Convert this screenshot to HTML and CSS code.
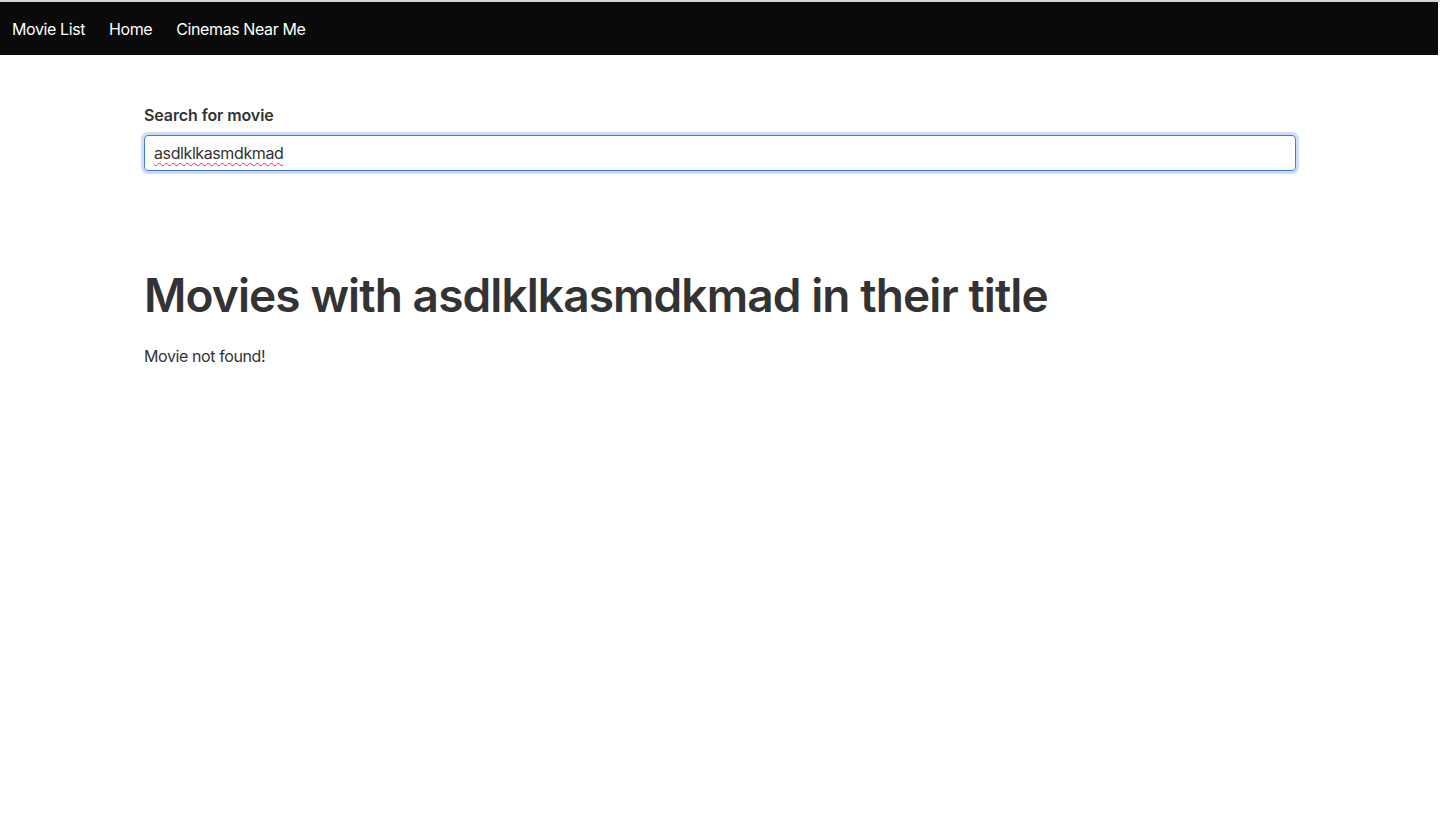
FILE: index.html
```html
<!DOCTYPE html>
<html lang="en">
<head>
<meta charset="utf-8">
<title>Movie List</title>
<link rel="stylesheet" href="styles.css">
</head>
<body>
<div class="topline"></div>
<nav class="navbar">
  <a class="nav-brand" href="#">Movie List</a>
  <a class="nav-link" href="#">Home</a>
  <a class="nav-link" href="#">Cinemas Near Me</a>
</nav>
<main class="container">
  <form class="search">
    <label class="label" for="q">Search for movie</label>
    <div class="input"><span class="typed">asdlklkasmdkmad</span></div>
  </form>
  <h1 class="title">Movies with asdlklkasmdkmad in their title</h1>
  <p class="empty">Movie not found!</p>
</main>
</body>
</html>
```
FILE: styles.css
```css
* { box-sizing: border-box; }
html, body { margin: 0; padding: 0; background: #fff; }
body {
  font-family: Inter, "Noto Sans", "Liberation Sans", sans-serif;
  color: #333;
  font-size: 16px;
  line-height: 1.5;
  letter-spacing: -0.4px;
}
.topline { height: 2px; background: #d4d4d4; }
.navbar {
  height: 53px;
  background: #0a0a0a;
  display: flex;
  align-items: center;
  gap: 24px;
  padding: 0 12px;
  margin-right: 2px;
}
.nav-brand, .nav-link {
  color: #fff;
  text-decoration: none;
  font-size: 16px;
}
.container {
  width: 1152px;
  margin: 0 auto;
  padding-top: 48px;
}
.search { display: flex; flex-direction: column; gap: 8px; }
.label { font-weight: 600; font-size: 16px; line-height: 24px; letter-spacing: -0.1px; }
.input {
  height: 36px;
  border: 1px solid #3b7ae8;
  border-radius: 4px;
  box-shadow: 0 0 0 3px rgba(59, 122, 232, 0.25);
  padding: 0 9px;
  display: flex;
  align-items: center;
  font-size: 16px;
  color: #333;
}
.typed {
  text-decoration: underline wavy #e53935;
  text-decoration-thickness: 1px;
  text-underline-offset: 3px;
}
.title {
  margin: 97px 0 0;
  font-size: 46px;
  font-weight: 600;
  line-height: 1.2;
  letter-spacing: -0.9px;
}
.empty { margin: 21px 0 0; }
```
